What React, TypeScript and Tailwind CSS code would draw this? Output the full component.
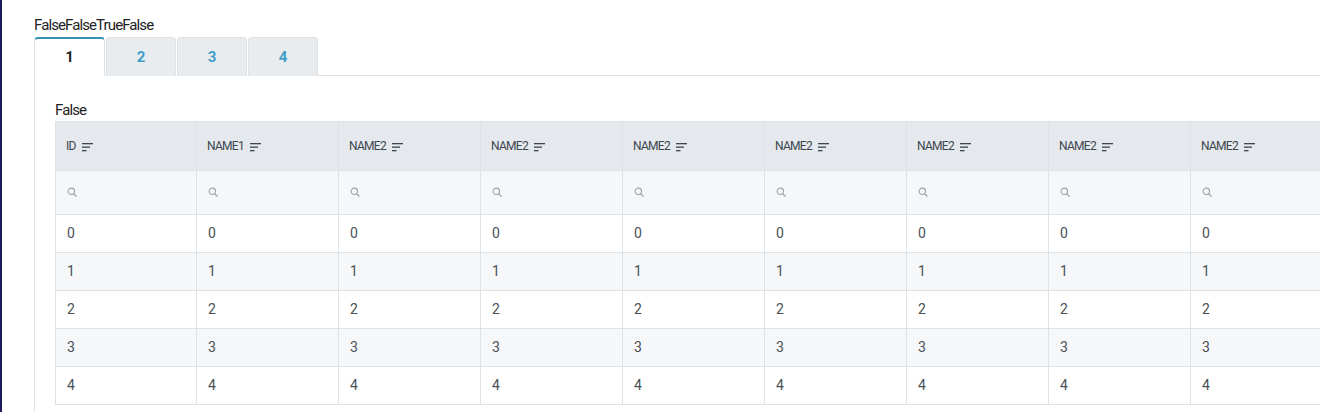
const COLS = ['ID', 'NAME1', 'NAME2', 'NAME2', 'NAME2', 'NAME2', 'NAME2', 'NAME2', 'NAME2', 'NAME2']
const ROWS = [0, 1, 2, 3, 4]
const TABS = ['1', '2', '3', '4']
const narrow = { fontFamily: 'Roboto, sans-serif', letterSpacing: '-0.06em' }

function SortIcon() {
  return (
    <svg width="12" height="10" viewBox="0 0 12 10" className="ml-[6px] inline-block">
      <rect x="0" y="1" width="11" height="1.3" fill="#3d4650" />
      <rect x="0" y="4.5" width="8" height="1.3" fill="#3d4650" />
      <rect x="0" y="8" width="4.5" height="1.3" fill="#3d4650" />
    </svg>
  )
}

function SearchIcon() {
  return (
    <svg width="11" height="11" viewBox="0 0 11 11">
      <circle cx="4.3" cy="4.3" r="3.2" fill="none" stroke="#9aa3ab" strokeWidth="1.1" />
      <line x1="6.6" y1="6.6" x2="9.5" y2="9.5" stroke="#9aa3ab" strokeWidth="1.3" />
    </svg>
  )
}

export default function App() {
  return (
    <div className="flex h-[412px] w-[1320px] overflow-hidden bg-white">
      <div className="w-[2px] shrink-0 bg-[#1c1a5c]" />
      <div className="min-w-0 flex-1 pl-[32px] pt-[15px]">
        <div className="text-[15px] leading-[20px] text-[#222]" style={narrow}>
          FalseFalseTrueFalse
        </div>
        <div className="mt-[2px] flex h-[39px]">
          {TABS.map((t, i) => (
            <div
              key={t}
              className={
                i === 0
                  ? 'flex w-[71px] items-center justify-center rounded-t-[4px] border-x border-t-2 border-[#dde2e6] border-t-[#3a8fb5] bg-white text-[15px] font-bold text-[#222]'
                  : 'ml-[1px] flex w-[70px] items-center justify-center rounded-t-[4px] border border-b-0 border-[#dde2e6] bg-[#e8ecef] text-[15px] font-bold text-[#3f9ec8]'
              }
              style={{ fontFamily: 'Roboto, sans-serif' }}
            >
              {t}
            </div>
          ))}
          <div className="flex-1 border-b border-[#dde2e6]" />
        </div>
        <div className="h-full w-[1500px] border-l border-[#dde2e6] pl-[20px] pt-[24px]">
          <div className="text-[15px] leading-[20px] text-[#222]" style={narrow}>
            False
          </div>
          <table className="mt-[1px] w-[1419px] table-fixed border-collapse" style={{ fontFamily: 'Roboto, sans-serif' }}>
            <colgroup>
              {COLS.map((_, i) => (
                <col key={i} className={i === 0 ? 'w-[141px]' : 'w-[142px]'} />
              ))}
            </colgroup>
            <thead>
              <tr className="h-[49px] bg-[#e5e9ed]">
                {COLS.map((c, i) => (
                  <th
                    key={i}
                    className="border border-[#dde2e6] pl-[10px] text-left text-[12px] font-normal text-[#3d4650]"
                    style={narrow}
                  >
                    {c}
                    <SortIcon />
                  </th>
                ))}
              </tr>
              <tr className="h-[44px] bg-[#f5f7f8]">
                {COLS.map((_, i) => (
                  <th key={i} className="border border-[#dde2e6] pl-[11px] text-left">
                    <SearchIcon />
                  </th>
                ))}
              </tr>
            </thead>
            <tbody>
              {ROWS.map((r) => (
                <tr key={r} className={r % 2 === 1 ? 'h-[38px] bg-[#f5f7f8]' : 'h-[38px] bg-white'}>
                  {COLS.map((_, i) => (
                    <td key={i} className="border border-[#dde2e6] pl-[11px] text-[14px] text-[#495057]">
                      {r}
                    </td>
                  ))}
                </tr>
              ))}
            </tbody>
          </table>
        </div>
      </div>
    </div>
  )
}
